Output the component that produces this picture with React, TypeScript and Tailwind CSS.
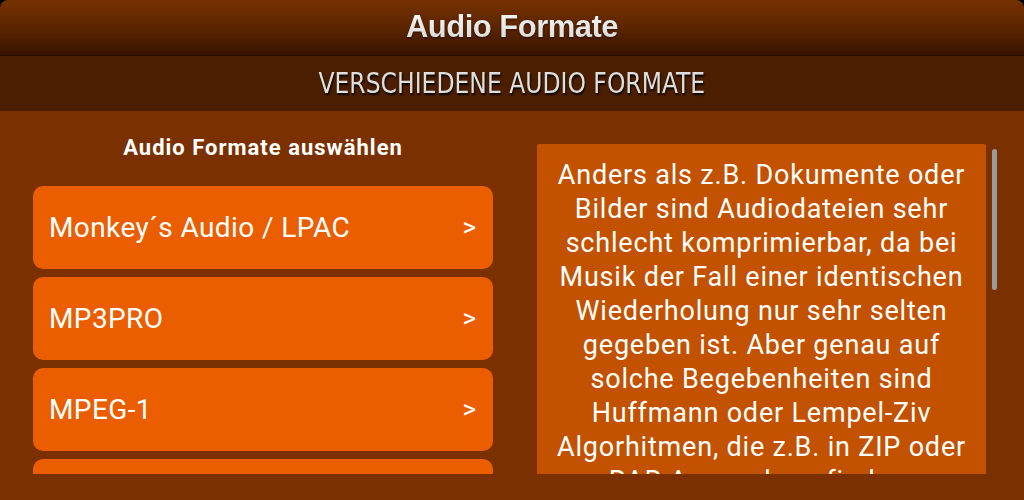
const FORMATS = ['Monkey´s Audio / LPAC', 'MP3PRO', 'MPEG-1', 'MPEG-2'];

const TEXT =
  'Anders als z.B. Dokumente oder Bilder sind Audiodateien sehr schlecht komprimierbar, da bei Musik der Fall einer identischen Wiederholung nur sehr selten gegeben ist. Aber genau auf solche Begebenheiten sind Huffmann oder Lempel-Ziv Algorhitmen, die z.B. in ZIP oder RAR Anwendung finden.';

export default function App() {
  return (
    <div className="w-[1024px] h-[500px] overflow-hidden bg-black font-['Roboto',sans-serif]">
      {/* Title bar */}
      <div className="h-[56px] rounded-t-[8px] bg-gradient-to-b from-[#763100] via-[#5c2500] to-[#371400] border-b border-[#2a0e00] flex items-center justify-center">
        <h1 className="font-['Liberation_Sans',Arial,sans-serif] font-bold text-[31px] tracking-[-0.5px] bg-gradient-to-b from-white to-[#cfcfcf] bg-clip-text text-transparent drop-shadow-[0_1px_1px_rgba(0,0,0,0.5)]">
          Audio Formate
        </h1>
      </div>

      {/* Sub header */}
      <div className="h-[55px] bg-[#4b1e00] flex items-center justify-center">
        <h2 className="font-['Liberation_Sans_Narrow','DejaVu_Sans_Condensed',sans-serif] text-[29px] text-[#dedede] [text-shadow:1px_2px_2px_rgba(0,0,0,0.9)] scale-x-90">
          VERSCHIEDENE AUDIO FORMATE
        </h2>
      </div>

      {/* Body */}
      <div className="relative h-[389px] bg-[#7a3000]">
        <div className="flex h-[363px]">
          <div className="ml-[33px] w-[460px] flex flex-col">
            <div className="h-[70px] shrink-0 flex items-center justify-center pt-[2px]">
              <p className="text-white font-bold text-[22px] tracking-[1px]">Audio Formate auswählen</p>
            </div>
            <div className="mt-[5px] flex flex-col gap-[8px] overflow-hidden">
              {FORMATS.map((f) => (
                <div key={f} className="h-[83px] shrink-0 rounded-[10px] bg-[#ea5e00] flex items-center justify-between pl-[16px] pr-[17px]">
                  <span className="text-white text-[28px] tracking-[0.4px]">{f}</span>
                  <span className="text-white text-[26px]">&gt;</span>
                </div>
              ))}
            </div>
          </div>

          <div className="ml-[44px] mt-[33px] w-[449px] h-[330px] bg-[#c35200] rounded-t-[2px] overflow-hidden px-[12px] pt-[14px]">
            <p className="text-white text-[27px] tracking-[0.8px] leading-[34px] text-center">{TEXT}</p>
          </div>
        </div>

        {/* scroll indicator */}
        <div className="absolute left-[992px] top-[38px] w-[5px] h-[141px] rounded-full bg-[#9a9a9a]" />
      </div>
    </div>
  );
}
